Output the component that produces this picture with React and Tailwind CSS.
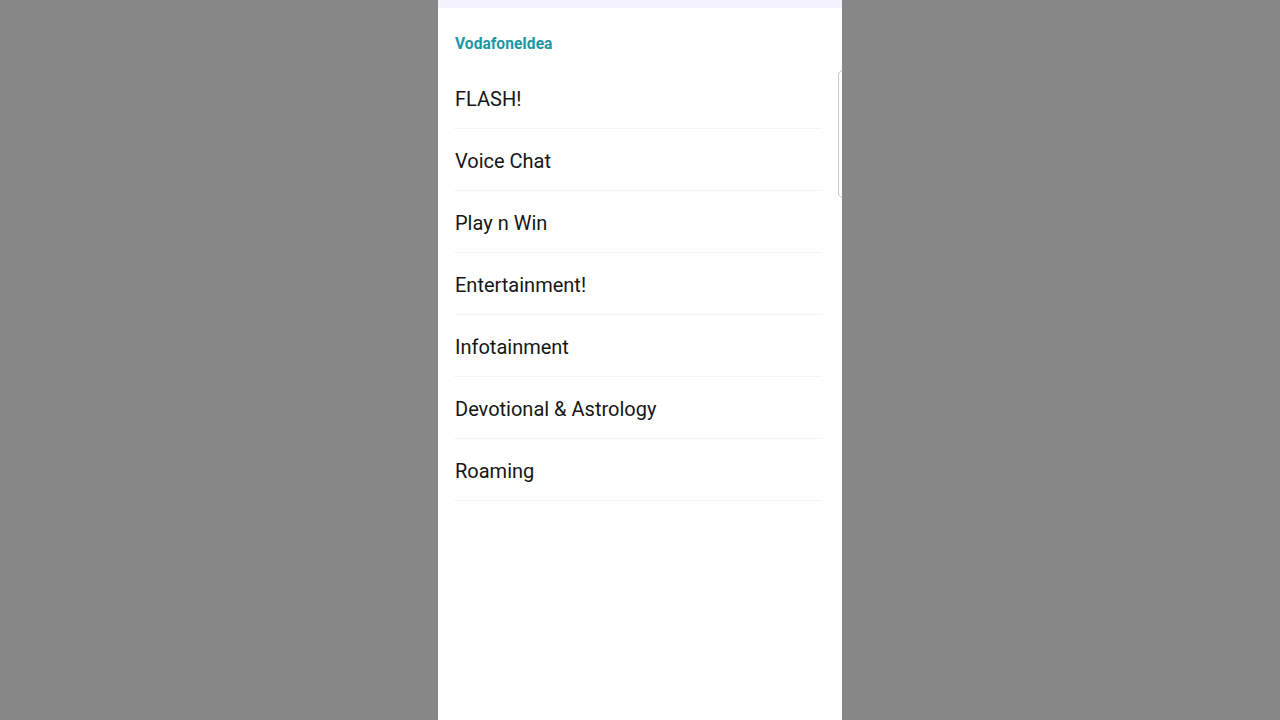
import React from "react";

const items = [
  "FLASH!",
  "Voice Chat",
  "Play n Win",
  "Entertainment!",
  "Infotainment",
  "Devotional & Astrology",
  "Roaming",
];

export default function App() {
  return (
    <div
      className="w-[1280px] h-[720px] bg-[#878787] flex justify-center overflow-hidden"
      style={{ fontFamily: "Roboto, 'Liberation Sans', sans-serif" }}
    >
      <div className="relative w-[404px] h-[720px] bg-white flex flex-col overflow-hidden">
        <div className="h-[8px] bg-[#f4f3fc]" />
        <div className="h-[59px] pl-[17px] pt-[27px]">
          <span className="text-[15.6px] leading-[18px] font-bold text-[#1b97a3] block">
            VodafoneIdea
          </span>
        </div>
        <div className="flex flex-col pl-[16px] pr-[20px]">
          {items.map((t) => (
            <div
              key={t}
              className="h-[62px] flex items-center border-b border-[#f4f4f4] pt-[2px]"
            >
              <span className="text-[20px] text-[#161616] leading-[24px] pl-[1px]">{t}</span>
            </div>
          ))}
        </div>
        <div className="absolute left-[400px] top-[70px] w-[12px] h-[128px] rounded-[5px] border border-[#c8c8c8]" />
      </div>
    </div>
  );
}
